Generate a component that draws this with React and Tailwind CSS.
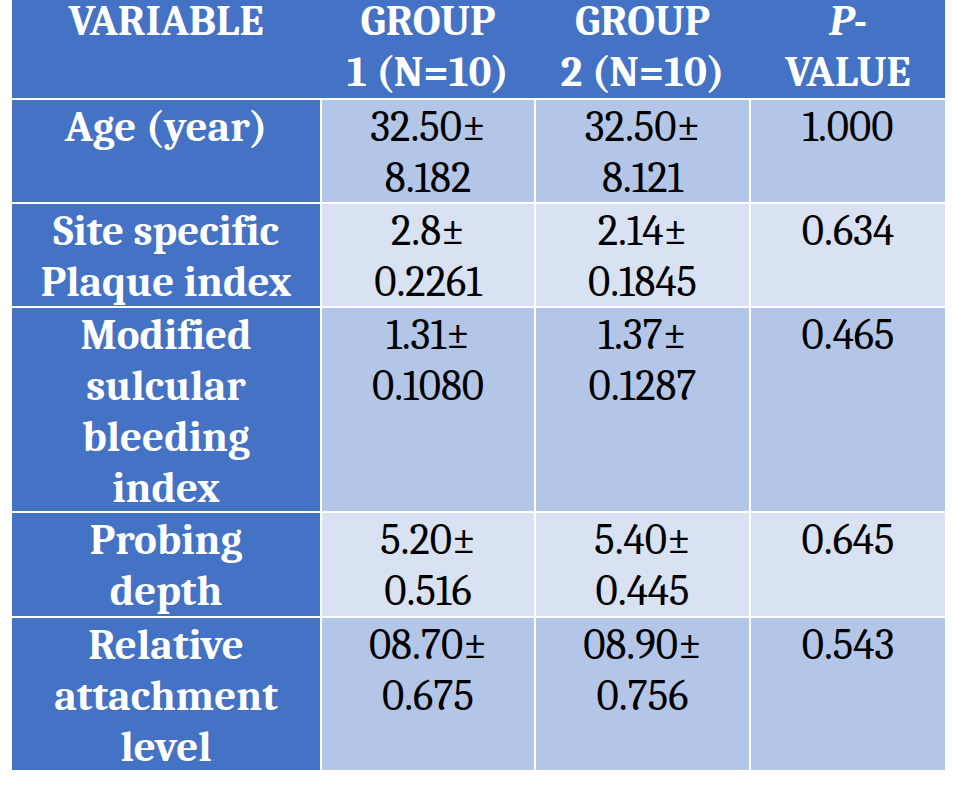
import React from "react";

const rows = [
  { name: ["Age (year)"], g1: ["32.50±", "8.182"], g2: ["32.50±", "8.121"], p: "1.000", h: "grid-rows-[102px]", bg: "bg-[#B4C6E7]" },
  { name: ["Site specific", "Plaque index"], g1: ["2.8±", "0.2261"], g2: ["2.14±", "0.1845"], p: "0.634", h: "grid-rows-[102px]", bg: "bg-[#D9E2F3]" },
  { name: ["Modified", "sulcular", "bleeding", "index"], g1: ["1.31±", "0.1080"], g2: ["1.37±", "0.1287"], p: "0.465", h: "grid-rows-[203px]", bg: "bg-[#B4C6E7]" },
  { name: ["Probing", "depth"], g1: ["5.20±", "0.516"], g2: ["5.40±", "0.445"], p: "0.645", h: "grid-rows-[103px]", bg: "bg-[#D9E2F3]" },
  { name: ["Relative", "attachment", "level"], g1: ["08.70±", "0.675"], g2: ["08.90±", "0.756"], p: "0.543", h: "grid-rows-[152px]", bg: "bg-[#B4C6E7]" },
];

const Lines = ({ lines }) => (
  <>
    {lines.map((l, i) => (
      <div key={i} className="whitespace-nowrap">{l}</div>
    ))}
  </>
);

const Head = ({ top, bottom }) => (
  <div>
    <div className="whitespace-nowrap leading-[43px]">{top}</div>
    <div className="whitespace-nowrap mt-[4px]">{bottom}</div>
  </div>
);

export default function App() {
  return (
    <div className="bg-white min-h-[795px] font-serif text-[43px] leading-[51px] text-center">
      <div className="ml-[12px] w-[933px] flex flex-col gap-[2px]">
        <div className="h-[98px] overflow-hidden bg-[#4472C4] grid grid-cols-[308px_212px_213px_194px] gap-x-[2px] text-white font-bold">
          <Head top="VARIABLE" bottom="" />
          <Head top="GROUP" bottom="1 (N=10)" />
          <Head top="GROUP" bottom="2 (N=10)" />
          <Head top={<><i>P</i>-</>} bottom="VALUE" />
        </div>
        {rows.map((r, i) => (
          <div key={i} className={`grid grid-cols-[308px_212px_213px_194px] gap-x-[2px] ${r.h}`}>
            <div className="bg-[#4472C4] text-white font-bold pt-[2px]">
              <Lines lines={r.name} />
            </div>
            <div className={`${r.bg} text-black pt-[2px]`}>
              <Lines lines={r.g1} />
            </div>
            <div className={`${r.bg} text-black pt-[2px]`}>
              <Lines lines={r.g2} />
            </div>
            <div className={`${r.bg} text-black pt-[2px]`}>{r.p}</div>
          </div>
        ))}
      </div>
    </div>
  );
}
